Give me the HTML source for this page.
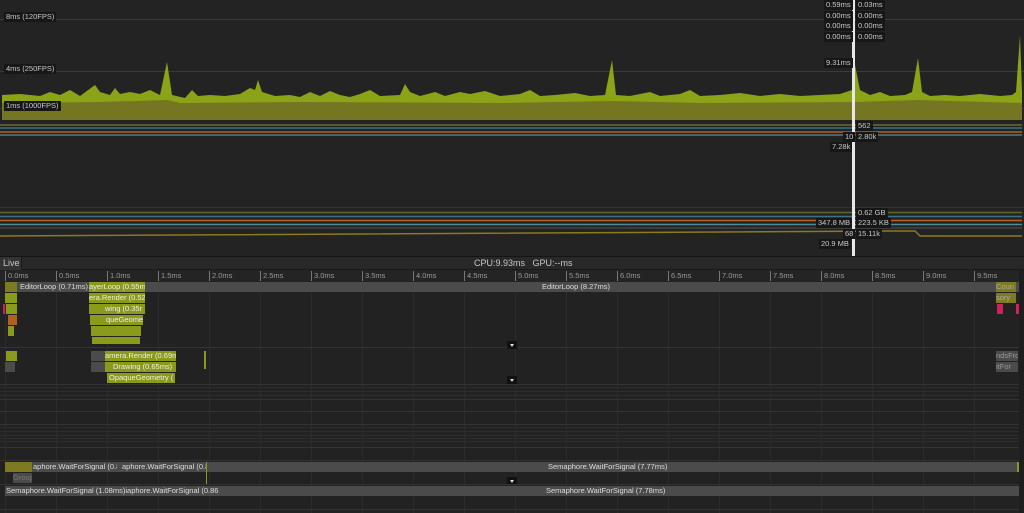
<!DOCTYPE html>
<html><head><style>
*{margin:0;padding:0;box-sizing:border-box}
body{width:1024px;height:513px;background:#222;position:relative;overflow:hidden;font-family:"Liberation Sans",sans-serif;font-size:8px;color:#c8c8c8}
.a{position:absolute}
.lbl{position:absolute;background:#171717;color:#c8c8c8;font-size:7.5px;line-height:10px;padding:0 2px;white-space:nowrap}
.bar{position:absolute;height:10px;line-height:10px;font-size:7.5px;color:#ddd;white-space:nowrap;overflow:hidden}
.g{background:#8a9a1a;color:#eee}
.gr{background:#4b4b4b}
.tick{position:absolute;top:271px;font-size:7.5px;color:#999;border-left:1px solid #777;padding-left:2px;height:10px;line-height:9px}
.vl{position:absolute;top:282px;width:1px;height:231px;background:#2b2b2b}
.hl{position:absolute;left:0;width:1020px;height:1px;background:#333}
.dd{position:absolute;width:10px;height:8px;background:#111}
.dd:after{content:"";position:absolute;left:3px;top:3px;border:2px solid transparent;border-top:3px solid #ddd}
</style></head><body>
<svg class="a" style="left:0;top:0" width="1024" height="256">
<rect width="1024" height="256" fill="#232323"/>
<line x1="0" y1="19.5" x2="1024" y2="19.5" stroke="#3a3a3a"/>
<line x1="0" y1="71.5" x2="1024" y2="71.5" stroke="#3a3a3a"/>
<line x1="0" y1="108.5" x2="1024" y2="108.5" stroke="#3a3a3a"/>
<path fill="#8aa317" d="M2 120 L2 95 L20 94 L40 96 L50 92 L60 95 L70 90 L80 96 L95 85 L100 92 L110 95 L115 88 L120 94 L130 92 L140 94 L150 90 L160 95 L167 62 L172 95 L185 98 L192 90 L198 96 L210 95 L225 96 L240 94 L250 88 L255 90 L258 80 L262 92 L275 96 L290 95 L300 97 L310 92 L320 96 L330 91 L340 95 L350 97 L360 94 L370 90 L380 96 L400 95 L405 84 L410 92 L420 96 L435 92 L445 96 L460 92 L470 94 L485 91 L500 96 L520 94 L530 90 L540 96 L555 95 L575 93 L590 96 L605 95 L612 60 L616 95 L630 96 L650 92 L660 96 L680 94 L690 90 L700 96 L720 95 L740 93 L760 96 L780 94 L800 96 L820 95 L840 94 L852 90 L855 65 L860 90 L870 95 L880 92 L890 96 L905 95 L912 92 L918 58 L922 92 L930 96 L945 95 L960 96 L980 94 L1000 96 L1012 95 L1016 92 L1020 35 L1022 92 L1022 120 Z"/>
<path fill="#757622" d="M2 120 L2 103 L100 102 L167 100 L180 103 L300 102 L500 103 L612 101 L700 103 L855 102 L918 100 L1022 103 L1022 120 Z"/>
<line x1="0" y1="125" x2="1022" y2="125" stroke="#6b6b2a" stroke-width="1.5"/>
<line x1="0" y1="128" x2="1022" y2="128" stroke="#3d6f8a" stroke-width="1.5"/>
<line x1="0" y1="132" x2="1022" y2="132" stroke="#b8621c" stroke-width="1.5"/>
<line x1="0" y1="135" x2="1022" y2="135" stroke="#4f7a8a" stroke-width="1.5"/>
<line x1="0" y1="207.5" x2="1024" y2="207.5" stroke="#333"/>
<path d="M0 212.5 L1022 212.5" stroke="#5f6a2a" stroke-width="1.5"/>
<line x1="0" y1="216.5" x2="1022" y2="216.5" stroke="#3d6f8a" stroke-width="1.5"/>
<line x1="0" y1="220.5" x2="1022" y2="220.5" stroke="#b8621c" stroke-width="1.5"/>
<line x1="0" y1="224.5" x2="1022" y2="224.5" stroke="#4f8a9a" stroke-width="1.5"/>
<line x1="0" y1="228" x2="1022" y2="228" stroke="#555" stroke-width="1"/>
<path d="M0 236 L900 231 L915 231 L920 236 L1022 236" stroke="#8a7a20" stroke-width="1.5" fill="none"/>
<rect x="852" y="0" width="3" height="256" fill="#e8e8e8"/>
</svg>
<div class="lbl" style="left:4px;top:12px">8ms (120FPS)</div>
<div class="lbl" style="left:4px;top:64px">4ms (250FPS)</div>
<div class="lbl" style="left:4px;top:101px">1ms (1000FPS)</div>
<div class="lbl" style="left:824px;top:0px">0.59ms</div><div class="lbl" style="left:856px;top:0px">0.03ms</div>
<div class="lbl" style="left:824px;top:11px">0.00ms</div><div class="lbl" style="left:856px;top:11px">0.00ms</div>
<div class="lbl" style="left:824px;top:21px">0.00ms</div><div class="lbl" style="left:856px;top:21px">0.00ms</div>
<div class="lbl" style="left:824px;top:32px">0.00ms</div><div class="lbl" style="left:856px;top:32px">0.00ms</div>
<div class="lbl" style="left:824px;top:58px">9.31ms</div>
<div class="lbl" style="left:856px;top:121px">562</div>
<div class="lbl" style="left:843px;top:132px">10</div><div class="lbl" style="left:856px;top:132px">2.80k</div>
<div class="lbl" style="left:830px;top:142px">7.28k</div>
<div class="lbl" style="left:856px;top:208px">0.62 GB</div>
<div class="lbl" style="left:816px;top:218px">347.8 MB</div><div class="lbl" style="left:856px;top:218px">223.5 KB</div>
<div class="lbl" style="left:843px;top:229px">68</div><div class="lbl" style="left:856px;top:229px">15.11k</div>
<div class="lbl" style="left:819px;top:239px">20.9 MB</div>
<div class="a" style="left:0;top:256px;width:1024px;height:1px;background:#151515"></div>
<div class="a" style="left:0;top:257px;width:1024px;height:13px;background:#282828;border-bottom:1px solid #1a1a1a"></div>
<div class="a" style="left:0;top:257px;width:22px;height:13px;background:#333;border-right:1px solid #1a1a1a;font-size:9px;line-height:13px;padding-left:3px">Live</div>
<div class="a" style="left:474px;top:257px;font-size:9px;line-height:13px;color:#c8c8c8">CPU:9.93ms &nbsp; GPU:--ms</div>
<div class="a" style="left:0;top:270px;width:1024px;height:12px;background:#242424"></div>
<div class="tick" style="left:5px">0.0ms</div><div class="tick" style="left:56px">0.5ms</div><div class="tick" style="left:107px">1.0ms</div><div class="tick" style="left:158px">1.5ms</div><div class="tick" style="left:209px">2.0ms</div><div class="tick" style="left:260px">2.5ms</div><div class="tick" style="left:311px">3.0ms</div><div class="tick" style="left:362px">3.5ms</div><div class="tick" style="left:413px">4.0ms</div><div class="tick" style="left:464px">4.5ms</div><div class="tick" style="left:515px">5.0ms</div><div class="tick" style="left:566px">5.5ms</div><div class="tick" style="left:617px">6.0ms</div><div class="tick" style="left:668px">6.5ms</div><div class="tick" style="left:719px">7.0ms</div><div class="tick" style="left:770px">7.5ms</div><div class="tick" style="left:821px">8.0ms</div><div class="tick" style="left:872px">8.5ms</div><div class="tick" style="left:923px">9.0ms</div><div class="tick" style="left:974px">9.5ms</div>
<div class="vl" style="left:5px"></div><div class="vl" style="left:56px"></div><div class="vl" style="left:107px"></div><div class="vl" style="left:158px"></div><div class="vl" style="left:209px"></div><div class="vl" style="left:260px"></div><div class="vl" style="left:311px"></div><div class="vl" style="left:362px"></div><div class="vl" style="left:413px"></div><div class="vl" style="left:464px"></div><div class="vl" style="left:515px"></div><div class="vl" style="left:566px"></div><div class="vl" style="left:617px"></div><div class="vl" style="left:668px"></div><div class="vl" style="left:719px"></div><div class="vl" style="left:770px"></div><div class="vl" style="left:821px"></div><div class="vl" style="left:872px"></div><div class="vl" style="left:923px"></div><div class="vl" style="left:974px"></div>
<div class="bar gr" style="left:5px;top:282px;width:1015px"></div>
<div class="bar g" style="left:5px;top:282px;width:12px;background:#7d7a22"></div>
<div class="bar" style="left:20px;top:282px">EditorLoop (0.71ms)</div>
<div class="bar g" style="left:89px;top:282px;width:56px">ayerLoop (0.55m</div>
<div class="bar" style="left:542px;top:282px">EditorLoop (8.27ms)</div>
<div class="bar g" style="left:996px;top:282px;width:20px;background:#7d7a22;color:#aaa">Coun</div>
<div class="bar g" style="left:5px;top:293px;width:12px"></div>
<div class="bar g" style="left:89px;top:293px;width:56px">era.Render (0.52</div>
<div class="bar g" style="left:996px;top:293px;width:20px;background:#7d7a22;color:#aaa">sory</div>
<div class="bar g" style="left:6px;top:304px;width:11px"></div>
<div class="a" style="left:3px;top:304px;width:2px;height:10px;background:#d02060"></div>
<div class="bar g" style="left:89px;top:304px;width:56px;padding-left:16px">wing (0.35r</div>
<div class="a" style="left:997px;top:304px;width:6px;height:10px;background:#d02060"></div>
<div class="a" style="left:1016px;top:304px;width:3px;height:10px;background:#d02060"></div>
<div class="bar g" style="left:8px;top:315px;width:9px;background:#b06020"></div>
<div class="bar g" style="left:90px;top:315px;width:53px;padding-left:16px">queGeome</div>
<div class="bar g" style="left:8px;top:326px;width:6px"></div>
<div class="bar g" style="left:91px;top:326px;width:50px"></div>
<div class="bar g" style="left:92px;top:337px;width:48px;height:7px"></div>
<div class="a" style="left:0;top:347px;width:1020px;height:1px;background:#333"></div>
<div class="dd" style="left:507px;top:341px"></div>
<div class="bar g" style="left:6px;top:351px;width:11px"></div>
<div class="bar gr" style="left:91px;top:351px;width:14px"></div>
<div class="bar g" style="left:105px;top:351px;width:71px">amera.Render (0.69m</div>
<div class="a" style="left:204px;top:351px;width:2px;height:18px;background:#8a9a1a"></div>
<div class="bar gr" style="left:996px;top:351px;width:22px;color:#999">ndsFro</div>
<div class="bar gr" style="left:5px;top:362px;width:10px"></div>
<div class="bar gr" style="left:91px;top:362px;width:14px"></div>
<div class="bar g" style="left:105px;top:362px;width:71px;padding-left:8px">Drawing (0.65ms)</div>
<div class="bar gr" style="left:996px;top:362px;width:22px;color:#999">itFor</div>
<div class="bar g" style="left:107px;top:373px;width:68px;padding-left:2px">OpaqueGeometry (</div>
<div class="a" style="left:0;top:384px;width:1020px;height:1px;background:#333"></div>
<div class="dd" style="left:507px;top:376px"></div>
<div class="hl" style="top:387px;background:#2d2d2d"></div><div class="hl" style="top:391px;background:#2d2d2d"></div><div class="hl" style="top:395px;background:#2d2d2d"></div><div class="hl" style="top:399px"></div>
<div class="hl" style="top:411px"></div><div class="hl" style="top:424px"></div>
<div class="hl" style="top:427px;background:#2d2d2d"></div><div class="hl" style="top:431px;background:#2d2d2d"></div><div class="hl" style="top:435px;background:#2d2d2d"></div><div class="hl" style="top:438px;background:#2d2d2d"></div><div class="hl" style="top:441px;background:#2d2d2d"></div><div class="hl" style="top:447px"></div>
<div class="hl" style="top:460px"></div>
<div class="bar gr" style="left:5px;top:462px;width:1015px"></div>
<div class="bar g" style="left:5px;top:462px;width:27px;background:#7d7a22"></div>
<div class="bar" style="left:33px;top:462px;width:84px">aphore.WaitForSignal (0.84</div>
<div class="bar" style="left:122px;top:462px;width:84px">aphore.WaitForSignal (0.83</div>
<div class="a" style="left:206px;top:462px;width:1px;height:22px;background:#8a9a1a"></div>
<div class="bar" style="left:548px;top:462px">Semaphore.WaitForSignal (7.77ms)</div>
<div class="a" style="left:1017px;top:462px;width:4px;height:10px;background:#8a9a1a"></div>
<div class="bar gr" style="left:13px;top:473px;width:19px;color:#777">Group</div>
<div class="dd" style="left:507px;top:477px"></div>
<div class="hl" style="top:484px"></div>
<div class="bar gr" style="left:5px;top:486px;width:1015px;padding-left:1px">Semaphore.WaitForSignal (1.08ms)iaphore.WaitForSignal (0.86</div>
<div class="bar" style="left:546px;top:486px">Semaphore.WaitForSignal (7.78ms)</div>
<div class="hl" style="top:509px"></div>
<div class="a" style="left:1019px;top:270px;width:5px;height:243px;background:#1e1e1e"></div>
</body></html>
